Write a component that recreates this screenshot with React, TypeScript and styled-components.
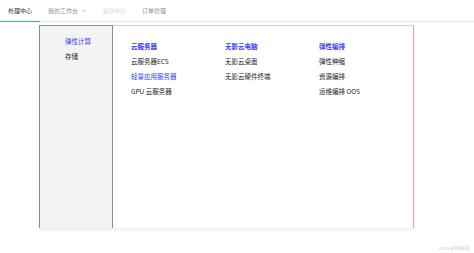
import styled, { createGlobalStyle } from "styled-components";

const GlobalStyle = createGlobalStyle`
  html, body {
    margin: 0;
    padding: 0;
    background: #ffffff;
  }
  body {
    font-family: "Noto Sans CJK SC", "Liberation Sans", sans-serif;
  }
`;

const Page = styled.div`
  position: relative;
  width: 474px;
  height: 253px;
  overflow: hidden;
`;

const Menu = styled.ul`
  display: flex;
  margin: 0;
  padding: 0;
  list-style: none;
  height: 21px;
  border-bottom: 1px solid #e6e6e6;
`;

const MenuItem = styled.li<{ $active?: boolean; $disabled?: boolean }>`
  display: flex;
  align-items: center;
  gap: 3px;
  padding: 0 8px;
  height: 22px;
  margin-bottom: -1px;
  box-sizing: border-box;
  font-size: 6px;
  color: ${(p) => (p.$active ? "#303133" : p.$disabled ? "#d3d6db" : "#909399")};
  border-bottom: 1px solid ${(p) => (p.$active ? "#409eff" : "transparent")};
`;

const Arrow = styled.svg`
  width: 5px;
  height: 5px;
`;

const Panel = styled.div`
  display: flex;
  margin: 3px 0 0 39px;
  width: 375px;
  height: 203px;
  box-shadow: 0 2px 3px rgba(0, 0, 0, 0.08);
`;

const Side = styled.ul`
  margin: 0;
  padding: 11px 0 0 25px;
  list-style: none;
  width: 78px;
  box-sizing: border-box;
  background: #f3f3f3;
  border: 1px solid #8c8c8c;
  border-bottom: none;
  display: flex;
  flex-direction: column;
  gap: 7px;
`;

const SideItem = styled.li<{ $active?: boolean }>`
  font-size: 6.5px;
  line-height: 8px;
  color: ${(p) => (p.$active ? "#3a3cf0" : "#222")};
`;

const Content = styled.div`
  flex: 1;
  display: grid;
  grid-template-columns: repeat(3, 94px);
  align-content: start;
  padding: 16px 0 0 18px;
  border-top: 1px solid #f0c8cc;
  border-right: 1px solid #eba5ad;
  background: #fff;
`;

const Column = styled.ul`
  margin: 0;
  padding: 0;
  list-style: none;
  display: flex;
  flex-direction: column;
  gap: 7px;
`;

const Link = styled.li<{ $head?: boolean; $blue?: boolean }>`
  font-size: 6.5px;
  line-height: 8px;
  white-space: nowrap;
  font-weight: ${(p) => (p.$head ? 700 : 400)};
  color: ${(p) => (p.$head || p.$blue ? "#3a3cf0" : "#222")};
`;

const Watermark = styled.div`
  position: absolute;
  right: 4px;
  bottom: 2px;
  font-size: 4px;
  color: #c8c8c8;
`;

const columns = [
  [
    { t: "云服务器", head: true },
    { t: "云服务器ECS" },
    { t: "轻量应用服务器", blue: true },
    { t: "GPU 云服务器" },
  ],
  [{ t: "无影云电脑", head: true }, { t: "无影云桌面" }, { t: "无影云硬件终端" }],
  [
    { t: "弹性编排", head: true },
    { t: "弹性伸缩" },
    { t: "资源编排" },
    { t: "运维编排 OOS" },
  ],
];

export default function App() {
  return (
    <Page>
      <GlobalStyle />
      <Menu>
        <MenuItem $active>处理中心</MenuItem>
        <MenuItem>
          我的工作台
          <Arrow viewBox="0 0 10 10">
            <path d="M2 4l3 3 3-3" fill="none" stroke="#909399" strokeWidth="1" />
          </Arrow>
        </MenuItem>
        <MenuItem $disabled>消息中心</MenuItem>
        <MenuItem>订单管理</MenuItem>
      </Menu>
      <Panel>
        <Side>
          <SideItem $active>弹性计算</SideItem>
          <SideItem>存储</SideItem>
        </Side>
        <Content>
          {columns.map((col, i) => (
            <Column key={i}>
              {col.map((l) => (
                <Link key={l.t} $head={l.head} $blue={l.blue}>
                  {l.t}
                </Link>
              ))}
            </Column>
          ))}
        </Content>
      </Panel>
      <Watermark>CSDN @前端菜菜</Watermark>
    </Page>
  );
}
